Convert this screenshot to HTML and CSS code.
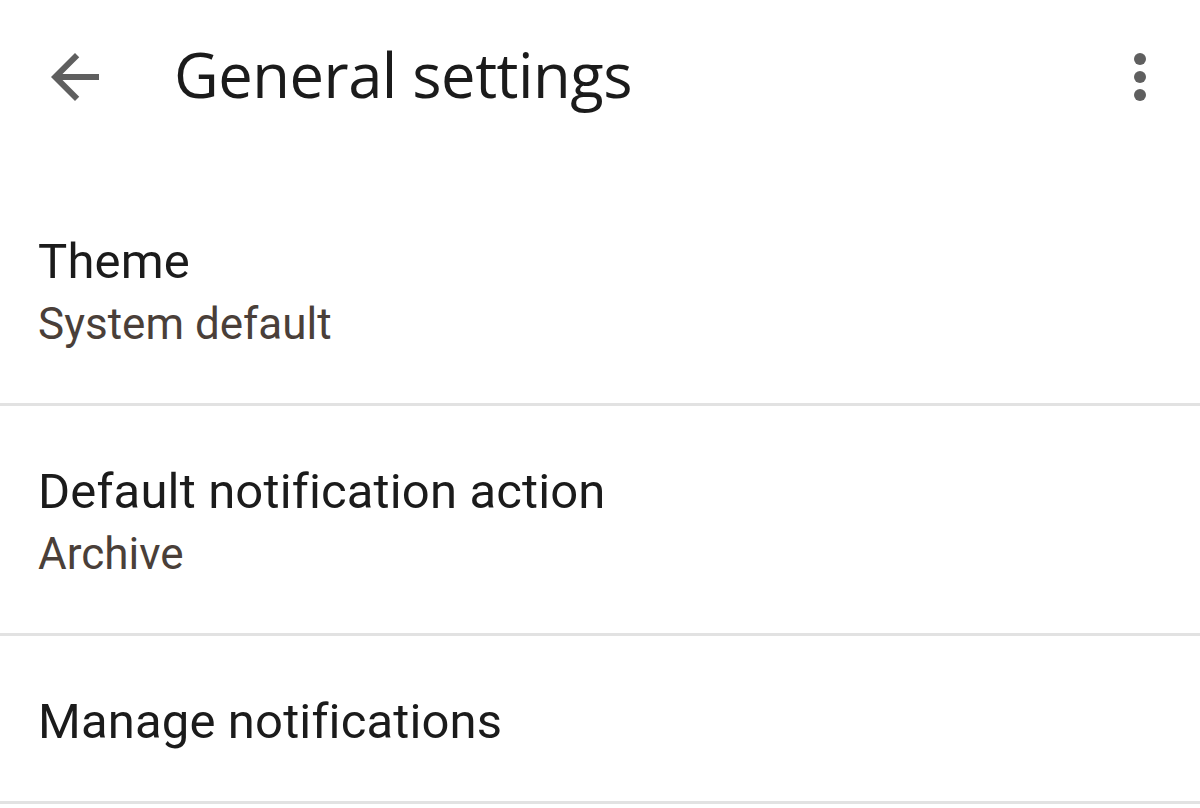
FILE: index.html
```html
<!DOCTYPE html>
<html>
<head>
<meta charset="utf-8">
<link rel="stylesheet" href="styles.css">
</head>
<body>
<div class="screen">
  <header class="appbar">
    <button class="icon-btn back" aria-label="Back">
      <svg viewBox="0 0 24 24" width="72" height="72"><path d="M20 11H7.83l5.59-5.59L12 4l-8 8 8 8 1.41-1.41L7.83 13H20v-2z" fill="#5f5f5f"/></svg>
    </button>
    <h1 class="title">General settings</h1>
    <button class="icon-btn more" aria-label="More options">
      <svg viewBox="0 0 24 24" width="72" height="72"><circle cx="12" cy="6" r="2" fill="#5f5f5f"/><circle cx="12" cy="12" r="2" fill="#5f5f5f"/><circle cx="12" cy="18" r="2" fill="#5f5f5f"/></svg>
    </button>
  </header>
  <ul class="prefs">
    <li class="pref">
      <div class="pref-title">Theme</div>
      <div class="pref-summary">System default</div>
    </li>
    <li class="pref">
      <div class="pref-title">Default notification action</div>
      <div class="pref-summary">Archive</div>
    </li>
    <li class="pref">
      <div class="pref-title">Manage notifications</div>
    </li>
  </ul>
</div>
</body>
</html>
```
FILE: styles.css
```css
html, body {
  margin: 0;
  padding: 0;
  background: #ffffff;
}
body {
  font-family: Roboto, "Noto Sans", sans-serif;
  color: #1b1b1b;
  width: 1200px;
  height: 808px;
  overflow: hidden;
}
.appbar {
  display: flex;
  align-items: flex-start;
  box-sizing: border-box;
  height: 176px;
  padding: 41px 24px 0 39px;
}
.icon-btn {
  border: 0;
  background: none;
  padding: 0;
  margin: 0;
  width: 72px;
  height: 72px;
  display: block;
}
.icon-btn svg { display: block; }
.title {
  flex: 1;
  margin: -3px 0 0 63px;
  font-family: "Open Sans", sans-serif;
  font-weight: 400;
  font-size: 61.5px;
  line-height: 72px;
  color: #1b1b1b;
  letter-spacing: -0.5px;
}
.prefs {
  list-style: none;
  margin: 0;
  padding: 0;
}
.pref {
  padding: 58px 38px 51px;
  border-bottom: 3px solid #e2e2e2;
}
.pref-title {
  font-size: 49px;
  line-height: 56px;
  letter-spacing: 0.15px;
  color: #1b1b1b;
}
.pref-summary {
  margin-top: 6px;
  font-size: 44px;
  line-height: 56px;
  color: #4a3f39;
}
```
